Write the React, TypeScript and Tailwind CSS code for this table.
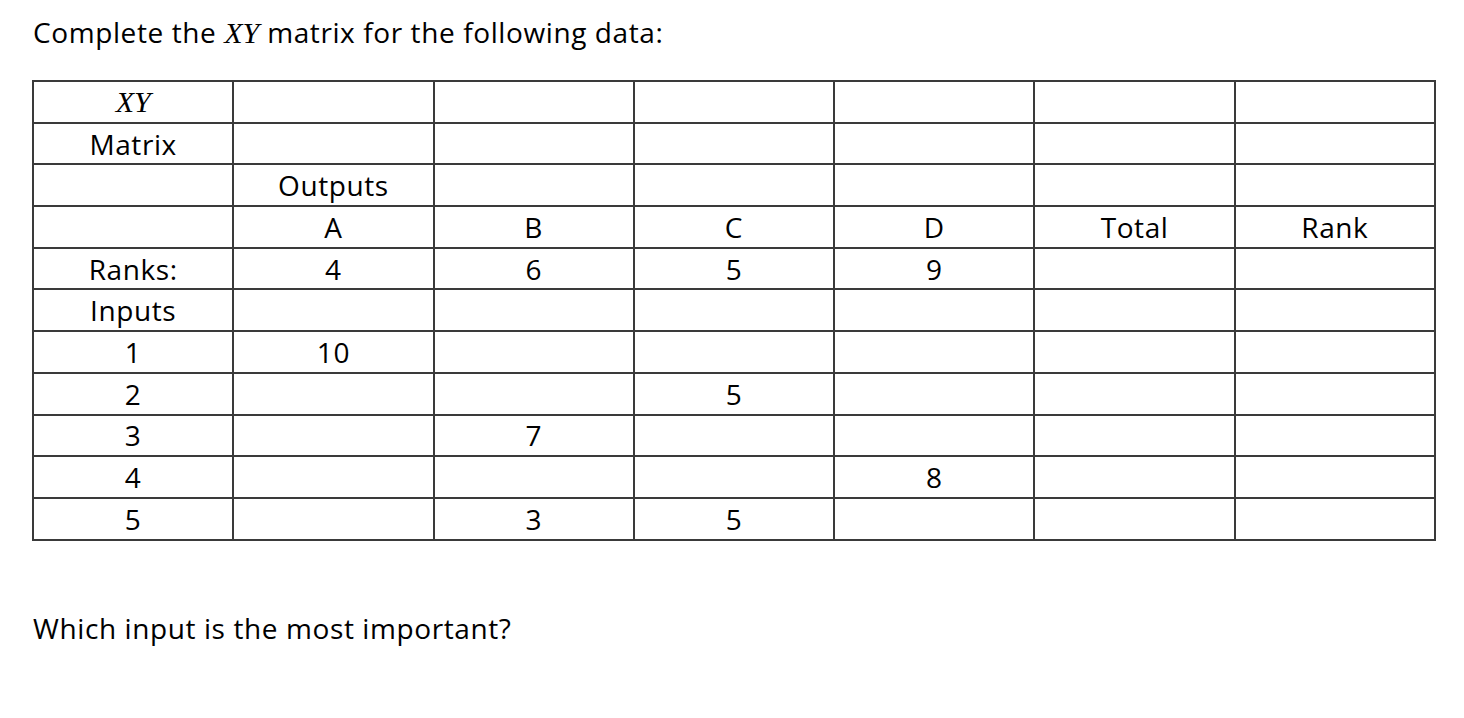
const rows: string[][] = [
  ['XY', '', '', '', '', '', ''],
  ['Matrix', '', '', '', '', '', ''],
  ['', 'Outputs', '', '', '', '', ''],
  ['', 'A', 'B', 'C', 'D', 'Total', 'Rank'],
  ['Ranks:', '4', '6', '5', '9', '', ''],
  ['Inputs', '', '', '', '', '', ''],
  ['1', '10', '', '', '', '', ''],
  ['2', '', '', '5', '', '', ''],
  ['3', '', '7', '', '', '', ''],
  ['4', '', '', '', '8', '', ''],
  ['5', '', '3', '5', '', '', ''],
];

function Cell({ text }: { text: string }) {
  if (text === 'XY') {
    return (
      <div className="flex items-center justify-center border-r-2 border-b-2 border-[#3a3a3a] h-[41.7px]">
        <span className="italic text-[30px] tracking-normal font-['Liberation_Serif',serif]">XY</span>
      </div>
    );
  }
  return (
    <div className="flex items-center justify-center border-r-2 border-b-2 border-[#3a3a3a] h-[41.7px]">
      <span>{text}</span>
    </div>
  );
}

export default function App() {
  return (
    <div className="w-[1464px] h-[718px] bg-white text-black font-['Open_Sans',sans-serif] text-[28px] tracking-[0.6px] leading-none">
      <div className="pl-[33px] pt-[18px]">
        Complete the <span className="italic font-['Liberation_Serif',serif] text-[30px] tracking-normal">XY</span> matrix for the following data:
      </div>
      <div className="ml-[32px] mt-[32px] w-[1404px] grid grid-cols-7 border-l-2 border-t-2 border-[#3a3a3a]">
        {rows.map((r, i) => r.map((c, j) => <Cell key={i + '-' + j} text={c} />))}
      </div>
      <div className="pl-[33px] mt-[73px]">Which input is the most important?</div>
    </div>
  );
}
